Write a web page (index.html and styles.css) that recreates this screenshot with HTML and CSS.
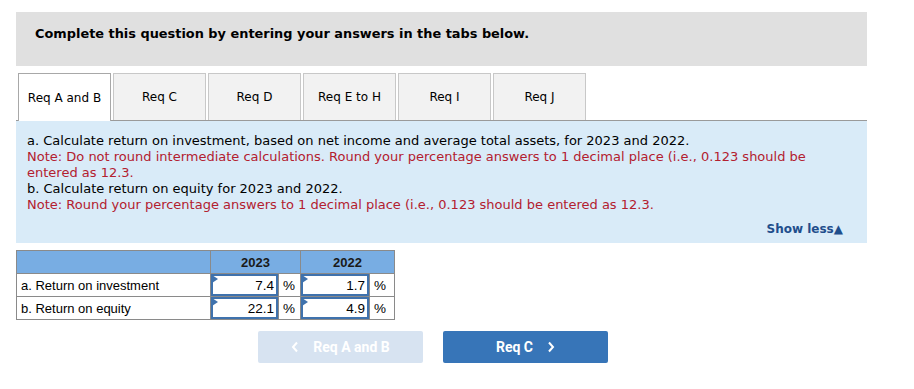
FILE: index.html
```html
<!DOCTYPE html>
<html lang="en">

<head>
    <meta charset="UTF-8">
    <title>Req A and B</title>
    <link rel="stylesheet" href="styles.css">
</head>

<body>
    <div class="page">
        <div class="prompt">Complete this question by entering your answers in the tabs below.</div>

        <!-- Tabs -->
        <div class="tabs">
            <div class="tab active">Req A and B</div>
            <div class="tab">Req C</div>
            <div class="tab">Req D</div>
            <div class="tab">Req E to H</div>
            <div class="tab">Req I</div>
            <div class="tab">Req J</div>
        </div>

        <div class="instructions">
            <p>a. Calculate return on investment, based on net income and average total assets, for 2023 and 2022.</p>
            <p class="note">Note: Do not round intermediate calculations. Round your percentage answers to 1 decimal place (i.e., 0.123 should be entered as 12.3.</p>
            <p>b. Calculate return on equity for 2023 and 2022.</p>
            <p class="note">Note: Round your percentage answers to 1 decimal place (i.e., 0.123 should be entered as 12.3.</p>
            <div class="show-less">Show less&#9650;</div>
        </div>

        <table class="answers">
            <tr class="head">
                <th class="label-col"></th>
                <th colspan="2">2023</th>
                <th colspan="2">2022</th>
            </tr>
            <tr>
                <td class="label-col">a. Return on investment</td>
                <td class="entry"><span class="field">7.4</span></td>
                <td class="unit">%</td>
                <td class="entry wide"><span class="field">1.7</span></td>
                <td class="unit">%</td>
            </tr>
            <tr>
                <td class="label-col">b. Return on equity</td>
                <td class="entry"><span class="field">22.1</span></td>
                <td class="unit">%</td>
                <td class="entry wide"><span class="field">4.9</span></td>
                <td class="unit">%</td>
            </tr>
        </table>

        <div class="nav">
            <button type="button" class="nav-btn prev">
                <svg width="8" height="12" viewBox="0 0 8 12"><path d="M6 1.5 L2 6 L6 10.5" fill="none" stroke="#fff" stroke-width="2"/></svg>
                <span>Req A and B</span>
            </button>
            <button type="button" class="nav-btn next">
                <span>Req C</span>
                <svg width="8" height="12" viewBox="0 0 8 12"><path d="M2 1.5 L6 6 L2 10.5" fill="none" stroke="#fff" stroke-width="2"/></svg>
            </button>
        </div>
    </div>
</body>

</html>
```

FILE: styles.css
```css
/* Global styles */
* {
    padding: 0;
    margin: 0;
    box-sizing: border-box;
}

body {
    font-family: "DejaVu Sans", Verdana, sans-serif;
    background-color: #fff;
    color: #000;
}

.page {
    width: 851px;
    margin-left: 16px;
    padding-top: 12px;
}

.prompt {
    background-color: #e0e0e0;
    height: 54px;
    padding: 14px 0 0 19px;
    font-size: 12.9px;
    font-weight: bold;
}

/* Tabs */
.tabs {
    display: flex;
    gap: 2px;
    padding: 7px 0 0 2px;
    border-bottom: 1px solid #9a9a9a;
}

.tab {
    width: 93px;
    height: 47px;
    background-color: #f2f2f2;
    border: 1px solid #c8c8c8;
    border-bottom: none;
    font-size: 12px;
    display: flex;
    align-items: center;
    justify-content: center;
}

.tab.active {
    background-color: #fff;
    border-color: #a8a8a8;
    margin-bottom: -1px;
    height: 48px;
}

/* Instructions box */
.instructions {
    background-color: #d9ebf8;
    padding: 12px 11px 6px 11px;
    font-size: 13px;
    line-height: 16px;
}

.instructions .note {
    color: #b3202f;
}

.show-less {
    text-align: right;
    margin-top: 8px;
    padding-right: 13px;
    font-size: 12px;
    font-weight: bold;
    color: #1f4e8c;
}

/* Answer table */
.answers {
    margin-top: 7px;
    border-collapse: collapse;
    font-family: "Liberation Sans", Arial, sans-serif;
    font-size: 13px;
}

.answers td,
.answers th {
    border: 1px solid #8a8a8a;
    height: 23px;
}

.answers .head th {
    background-color: #78ade3;
    font-weight: bold;
    text-align: center;
    color: #1a1a1a;
}

.label-col {
    width: 194px;
    padding-left: 4px;
}

.entry {
    width: 68px;
    padding: 0;
    position: relative;
}

.entry.wide {
    width: 69px;
}

.field {
    display: block;
    height: 22px;
    border: 2px solid #3f72ad;
    text-align: right;
    padding: 2px 2px 0 0;
    line-height: 16px;
    font-size: 13.5px;
}

/* small marker in the corner of each input */
.entry::before {
    content: "";
    position: absolute;
    left: 1px;
    top: 1px;
    border-left: 6px solid #3f72ad;
    border-bottom: 4px solid transparent;
    border-top: 4px solid transparent;
}

.unit {
    width: 22px;
    padding-left: 4px;
    font-size: 13.5px;
}

.answers td.unit:last-child {
    width: 25px;
}

/* Prev / next buttons */
.nav {
    display: flex;
    gap: 20px;
    margin: 11px 0 0 242px;
}

.nav-btn {
    width: 165px;
    height: 32px;
    border: none;
    border-radius: 2px;
    color: #fff;
    font-family: Roboto, "Liberation Sans", sans-serif;
    font-size: 14px;
    font-weight: bold;
    display: flex;
    align-items: center;
    justify-content: center;
    gap: 14px;
}

.nav-btn.prev {
    background-color: #d7e3f1;
}

.nav-btn.next {
    background-color: #3775b8;
}
```
